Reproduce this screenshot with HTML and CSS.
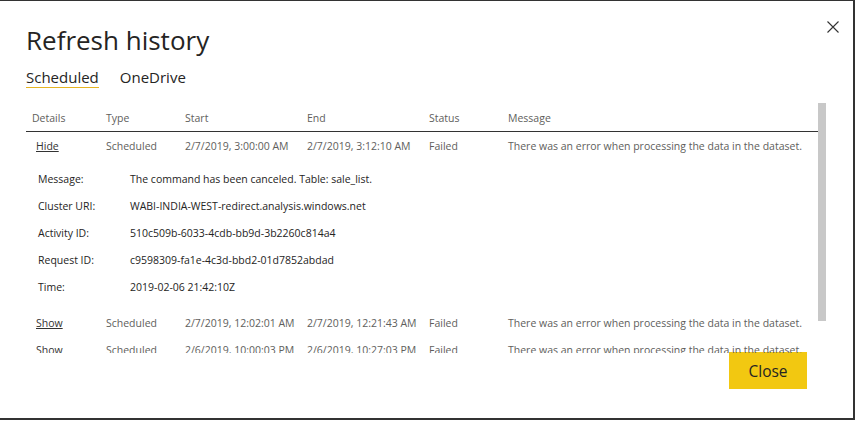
FILE: index.html
```html
<!DOCTYPE html>
<html lang="en">
<head>
<meta charset="utf-8">
<title>Refresh history</title>
<link rel="stylesheet" href="styles.css">
</head>
<body>
<div class="dialog">
  <div class="dialog-header">
    <h1 class="title">Refresh history</h1>
    <button class="close-x" aria-label="Close">
      <svg width="12" height="12" viewBox="0 0 12 12"><path d="M0.5 0.5 L11.5 11.5 M11.5 0.5 L0.5 11.5" stroke="#333" stroke-width="1.1" fill="none"/></svg>
    </button>
  </div>
  <nav class="tabs">
    <span class="tab active">Scheduled</span>
    <span class="tab">OneDrive</span>
  </nav>
  <div class="scroll-area">
    <div class="table">
      <div class="row head">
        <span>Details</span><span>Type</span><span>Start</span><span>End</span><span>Status</span><span>Message</span>
      </div>
      <div class="row">
        <span class="link">Hide</span><span>Scheduled</span><span>2/7/2019, 3:00:00 AM</span><span>2/7/2019, 3:12:10 AM</span><span>Failed</span><span>There was an error when processing the data in the dataset.</span>
      </div>
      <div class="details">
        <span class="label">Message:</span><span>The command has been canceled. Table: sale_list.</span>
        <span class="label">Cluster URI:</span><span>WABI-INDIA-WEST-redirect.analysis.windows.net</span>
        <span class="label">Activity ID:</span><span>510c509b-6033-4cdb-bb9d-3b2260c814a4</span>
        <span class="label">Request ID:</span><span>c9598309-fa1e-4c3d-bbd2-01d7852abdad</span>
        <span class="label">Time:</span><span>2019-02-06 21:42:10Z</span>
      </div>
      <div class="row">
        <span class="link">Show</span><span>Scheduled</span><span>2/7/2019, 12:02:01 AM</span><span>2/7/2019, 12:21:43 AM</span><span>Failed</span><span>There was an error when processing the data in the dataset.</span>
      </div>
      <div class="row">
        <span class="link">Show</span><span>Scheduled</span><span>2/6/2019, 10:00:03 PM</span><span>2/6/2019, 10:27:03 PM</span><span>Failed</span><span>There was an error when processing the data in the dataset.</span>
      </div>
      <div class="row">
        <span class="link">Show</span><span>Scheduled</span><span>2/6/2019, 8:00:02 PM</span><span>2/6/2019, 8:21:15 PM</span><span>Completed</span><span></span>
      </div>
    </div>
    <div class="scroll-thumb"></div>
  </div>
  <div class="footer">
    <button class="btn-close">Close</button>
  </div>
</div>
</body>
</html>
```
FILE: styles.css
```css
html, body {
  margin: 0;
  padding: 0;
  background: #ffffff;
}

body {
  font-family: "Open Sans", "Noto Sans", sans-serif;
  color: #252423;
}

.dialog {
  box-sizing: border-box;
  width: 855px;
  height: 420px;
  border-top: 1px solid #333333;
  border-right: 2px solid #333333;
  border-bottom: 2px solid #333333;
  padding: 0 27px 0 26px;
  display: flex;
  flex-direction: column;
}

.dialog-header {
  display: flex;
  justify-content: space-between;
  align-items: flex-start;
  padding-top: 20px;
}

.title {
  margin: 1px 0 0 0;
  font-size: 26px;
  line-height: 36px;
  font-weight: 400;
  color: #252423;
}

.close-x {
  flex: 0 0 12px;
  border: 0;
  background: transparent;
  padding: 0;
  margin: 0 -13px 0 0;
  width: 12px;
  height: 12px;
  display: flex;
}

.tabs {
  display: flex;
  gap: 21px;
  margin-top: 9px;
}

.tab {
  font-size: 15px;
  line-height: 20px;
  color: #252423;
  border-bottom: 1px solid transparent;
}

.tab.active {
  border-bottom-color: #e6b422;
}

.scroll-area {
  position: relative;
  margin-top: 15px;
  height: 250px;
  overflow: hidden;
}

.table {
  margin-right: 8px;
  font-size: 10.5px;
  line-height: 16px;
  color: #605e5c;
}

.row {
  display: grid;
  grid-template-columns: 74px 79px 122px 122px 79px 1fr;
  padding: 5.5px 0 5.5px 6px;
  white-space: nowrap;
}

.row.head {
  padding: 7px 0 5px 6px;
  border-bottom: 1px solid #333333;
  color: #605e5c;
}

.link {
  padding-left: 4px;
  color: #333333;
  text-decoration: underline;
}

.details {
  display: grid;
  grid-template-columns: 92px 1fr;
  padding: 6px 0 9px 12px;
  color: #252423;
}

.details span {
  padding: 5.5px 0;
}

.scroll-thumb {
  position: absolute;
  top: 0;
  right: 0;
  width: 8px;
  height: 218px;
  background: #c8c8c8;
}

.footer {
  display: flex;
  justify-content: flex-end;
  margin-top: -1px;
  padding-right: 19px;
}

.btn-close {
  width: 78px;
  height: 37px;
  border: 0;
  background: #f2c811;
  font-family: "Open Sans", "Noto Sans", sans-serif;
  font-size: 15.5px;
  color: #252423;
  padding: 0;
}
```
